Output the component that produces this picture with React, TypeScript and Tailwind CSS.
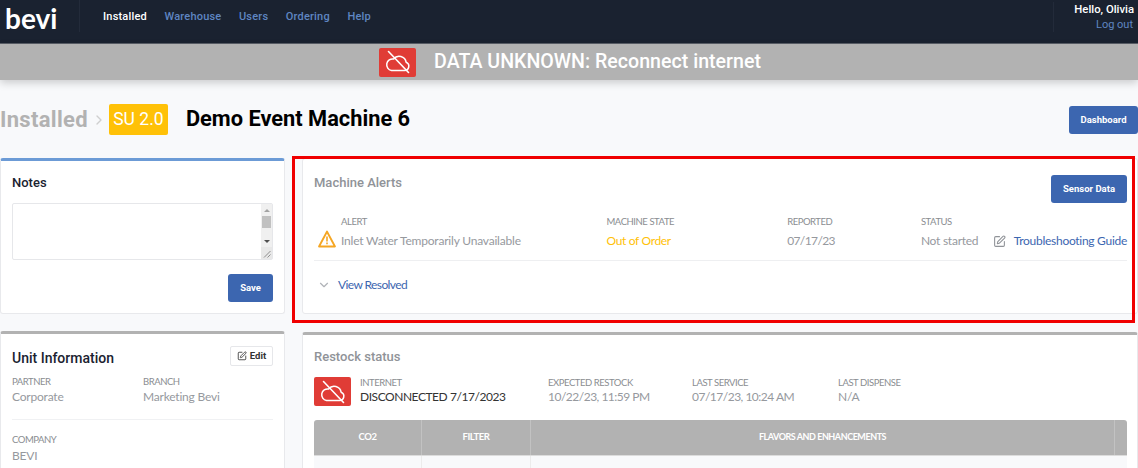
import { ChevronDown, ChevronRight, SquarePen } from "lucide-react";

const head = "font-['Roboto','Liberation_Sans',sans-serif]";
const body = "font-['Lato','Liberation_Sans',sans-serif]";

function CloudSlash() {
  return (
    <svg width={26} height={26} viewBox="0 0 26 26" fill="none" stroke="white" strokeWidth="1.5" strokeLinecap="round" strokeLinejoin="round">
      <path d="M6.5 21.5h13a4.3 4.3 0 0 0 1.6-8.3A7 7 0 0 0 8.6 10 5.8 5.8 0 0 0 6.5 21.5Z" />
      <path d="M3.5 2.5l20 21" strokeWidth="1.6" />
    </svg>
  );
}

function Warning() {
  return (
    <svg width={20} height={20} viewBox="0 0 20 20" fill="none" className="mt-[14px] ml-[3px] mr-[4px] shrink-0">
      <path d="M10 2.6 17.9 17.4H2.1Z" stroke="#f5a623" strokeWidth="2" strokeLinejoin="round" />
      <path d="M10 7.5v5" stroke="#f5a623" strokeWidth="1.6" />
      <path d="M10 13.6v1.6" stroke="#f5a623" strokeWidth="1.6" />
    </svg>
  );
}

function Label({ children }: { children: string }) {
  return <div className={`${body} text-[9.5px] leading-[14px] tracking-[-0.45px] text-[#8a8d91]`}>{children}</div>;
}

function Value({ children, color = "text-[#96999e]", track = "tracking-[-0.2px]" }: { children: string; color?: string; track?: string }) {
  return <div className={`${body} whitespace-nowrap text-[12px] leading-[16px] ${track} ${color}`}>{children}</div>;
}

function Btn({ children, w, h }: { children: string; w: string; h: string }) {
  return (
    <div className={`${w} ${h} ${head} flex items-center justify-center rounded-[3px] bg-[#3c66b0] text-[9.5px] font-bold text-white`}>
      {children}
    </div>
  );
}

export default function App() {
  return (
    <div className="relative h-[468px] w-[1138px] overflow-hidden bg-[#f8f9fb]">
      <header className={`${head} flex h-[44px] items-start border-b border-[#5a5f68] bg-[#1a2230]`}>
        <div className="flex h-[32px] w-[80px] items-center border-r border-[#232b3a] pl-[5px]">
          <span className="mt-[3px] font-['Lato',sans-serif] text-[28px] font-bold leading-[32px] text-white">bevi</span>
        </div>
        <nav className="ml-[23px] mt-[9px] flex gap-[17.5px] text-[11px] font-medium leading-[16px] tracking-[0.2px] text-[#5f86c2]">
          <span className="text-white">Installed</span>
          <span>Warehouse</span>
          <span>Users</span>
          <span>Ordering</span>
          <span>Help</span>
        </nav>
        <div className="ml-auto mt-[2px] flex h-[30px] flex-col items-end border-l border-[#232b3a] pl-[20px] pr-[4px] text-[11px] leading-[15px]">
          <span className="text-[11.3px] font-medium text-white">Hello, Olivia</span>
          <span className="pr-[1px] text-[#5f86c2]">Log out</span>
        </div>
      </header>

      <div className="flex h-[36px] items-center justify-center bg-[#b2b2b2] shadow-[0_3px_8px_rgba(0,0,0,0.18)]">
        <div className="ml-[2px] flex h-[29px] w-[37px] items-center justify-center rounded-[2px] bg-[#e03c36]">
          <CloudSlash />
        </div>
        <span className={`${head} ml-[18px] text-[19.6px] font-medium text-white`}>DATA UNKNOWN: Reconnect internet</span>
      </div>

      <div className="flex h-[76px] items-center pt-[3px]">
        <span className={`${head} text-[22px] font-bold tracking-[0.3px] text-[#b2b2b2]`}>Installed</span>
        <ChevronRight size={16} className="ml-[3px] text-[#cfcfcf]" />
        <span className={`${head} ml-[2px] flex h-[31px] w-[59px] items-center justify-center rounded-[2px] bg-[#ffc107] text-[17.5px] font-normal text-white`}>SU 2.0</span>
        <span className={`${head} ml-[18px] text-[21.8px] font-bold text-black`}>Demo Event Machine 6</span>
        <div className="ml-auto mt-[1px]">
          <Btn w="w-[69px]" h="h-[28px]">Dashboard</Btn>
        </div>
      </div>

      <div className="mt-[2px] flex gap-[17px]">
        <div className="flex w-[285px] shrink-0 flex-col gap-[17px]">
          <section className="h-[156px] rounded-[3px] border-x border-b border-t-[3px] border-x-[#e8e9ec] border-b-[#e8e9ec] border-t-[#6c9bd6] bg-white px-[11px] pt-[13px]">
            <h2 className={`${head} text-[13px] font-medium leading-[18px] text-[#1a2230]`}>Notes</h2>
            <div className="mt-[11px] flex h-[57px] justify-end rounded-[2px] border border-[#e6e7ea] bg-white">
              <div className="flex w-[11px] flex-col items-center bg-[#f0f0f0]">
                <span className="mt-[5px] h-0 w-0 border-x-[3px] border-b-[3px] border-x-transparent border-b-[#a3a3a3]" />
                <span className="mt-[4px] h-[12px] w-[9px] bg-[#c1c1c1]" />
                <span className="mt-[12px] h-0 w-0 border-x-[3px] border-t-[3px] border-x-transparent border-t-[#505050]" />
                <svg width={11} height={12} viewBox="0 0 11 12" className="mt-auto bg-[#e8e8e8]" stroke="#777" strokeWidth="0.8">
                  <path d="M3 10.5 9.5 4M6.5 10.5 9.5 7.5" />
                </svg>
              </div>
            </div>
            <div className="mt-[14px] flex justify-end">
              <Btn w="w-[45px]" h="h-[28px]">Save</Btn>
            </div>
          </section>

          <section className="h-[140px] rounded-[3px] border-x border-b border-t-[3px] border-x-[#e8e9ec] border-b-[#e8e9ec] border-t-[#b2b2b2] bg-white px-[11px] pt-[12px]">
            <div className="flex items-start justify-between">
              <h2 className={`${head} mt-[3px] text-[14px] font-medium leading-[18px] text-[#1a2230]`}>Unit Information</h2>
              <div className={`${head} flex h-[20px] w-[43px] items-center justify-center gap-[3px] rounded-[2px] border border-[#e6e7ea] text-[9.5px] font-bold text-[#333]`}>
                <SquarePen size={10} />
                Edit
              </div>
            </div>
            <div className="mt-[8px] flex">
              <div className="w-[131px]">
                <Label>PARTNER</Label>
                <Value>Corporate</Value>
              </div>
              <div>
                <Label>BRANCH</Label>
                <Value>Marketing Bevi</Value>
              </div>
            </div>
            <div className="mt-[14px] border-t border-[#f0f1f3] pt-[13px]">
              <Label>COMPANY</Label>
              <div className="mt-[1px]"><Value>BEVI</Value></div>
            </div>
          </section>
        </div>

        <div className="flex min-w-0 flex-1 flex-col gap-[18px]">
          <section className="h-[156px] rounded-[3px] border border-[#e8e9ec] bg-white pl-[11px] pr-[10px]">
            <div className="flex items-start justify-between pt-[16px]">
              <h2 className={`${head} text-[13px] font-medium leading-[16px] text-[#909398]`}>Machine Alerts</h2>
              <Btn w="w-[76px]" h="h-[28px]">Sensor Data</Btn>
            </div>
            <div className="mt-[12px] flex h-[46px] border-b border-[#eeeff1]">
              <Warning />
              <div className="w-[266px]">
                <Label>ALERT</Label>
                <div className="mt-[4px]"><Value>Inlet Water Temporarily Unavailable</Value></div>
              </div>
              <div className="w-[181px]">
                <Label>MACHINE STATE</Label>
                <div className="mt-[4px]"><Value color="text-[#ffc107]" track="tracking-[-0.33px]">Out of Order</Value></div>
              </div>
              <div className="w-[134px]">
                <Label>REPORTED</Label>
                <div className="mt-[4px]"><Value track="tracking-[-0.6px]">07/17/23</Value></div>
              </div>
              <div className="w-[72px]">
                <Label>STATUS</Label>
                <div className="mt-[4px]"><Value track="tracking-[-0.25px]">Not started</Value></div>
              </div>
              <div className="flex items-center self-start pt-[18px]">
                <SquarePen size={13} className="text-[#909398]" />
                <span className={`${body} ml-[8px] whitespace-nowrap text-[12px] leading-[16px] tracking-[-0.28px] text-[#3c66b0]`}>Troubleshooting Guide</span>
              </div>
            </div>
            <div className="mt-[16px] flex items-center">
              <ChevronDown size={14} className="ml-[3px] text-[#b0b3b8]" />
              <span className={`${body} ml-[7px] text-[12px] leading-[16px] tracking-[-0.6px] text-[#3c66b0]`}>View Resolved</span>
            </div>
          </section>

          <section className="h-[140px] rounded-[3px] border-x border-t-[3px] border-x-[#e8e9ec] border-t-[#b2b2b2] bg-white pl-[11px] pr-[10px] pt-[13px]">
            <h2 className={`${head} text-[13px] font-medium leading-[18px] text-[#909398]`}>Restock status</h2>
            <div className="mt-[10px] flex h-[32px] items-start">
              <div className="mt-[1px] flex h-[29px] w-[37px] items-center justify-center rounded-[2px] bg-[#e03c36]">
                <CloudSlash />
              </div>
              <div className="ml-[9px] w-[188px]">
                <Label>INTERNET</Label>
                <div className="-mt-[1px]"><Value color="text-[#333]" track="tracking-[-0.45px]">DISCONNECTED 7/17/2023</Value></div>
              </div>
              <div className="w-[144px]">
                <Label>EXPECTED RESTOCK</Label>
                <div className="-mt-[1px]"><Value track="tracking-[-0.5px]">10/22/23, 11:59 PM</Value></div>
              </div>
              <div className="w-[146px]">
                <Label>LAST SERVICE</Label>
                <div className="-mt-[1px]"><Value track="tracking-[-0.5px]">07/17/23, 10:24 AM</Value></div>
              </div>
              <div>
                <Label>LAST DISPENSE</Label>
                <div className="-mt-[1px]"><Value>N/A</Value></div>
              </div>
            </div>
            <div className={`${body} mt-[12px] flex h-[36px] rounded-t-[3px] border-b border-[#dcdcdc] bg-[#b2b2b2] text-[9.5px] font-bold tracking-[-0.4px] text-white`}>
              <div className="flex w-[108px] items-center justify-center border-r border-[#c2c2c2]">CO2</div>
              <div className="flex w-[109px] items-center justify-center border-r border-[#c2c2c2]">FILTER</div>
              <div className="flex flex-1 justify-center border-r border-[#c2c2c2] pt-[10px] text-[9px] tracking-[-0.45px]">FLAVORS AND ENHANCEMENTS</div>
              <div className="w-[12px]" />
            </div>
            <div className="flex h-[12px] bg-[#f8f9fb]">
              <div className="w-[108px] border-r border-[#ececec]" />
              <div className="w-[109px] border-r border-[#ececec]" />
            </div>
          </section>
        </div>
      </div>

      <div className="absolute left-[292px] top-[156px] h-[167px] w-[843px] border-[3px] border-[#f00000]" />
    </div>
  );
}
